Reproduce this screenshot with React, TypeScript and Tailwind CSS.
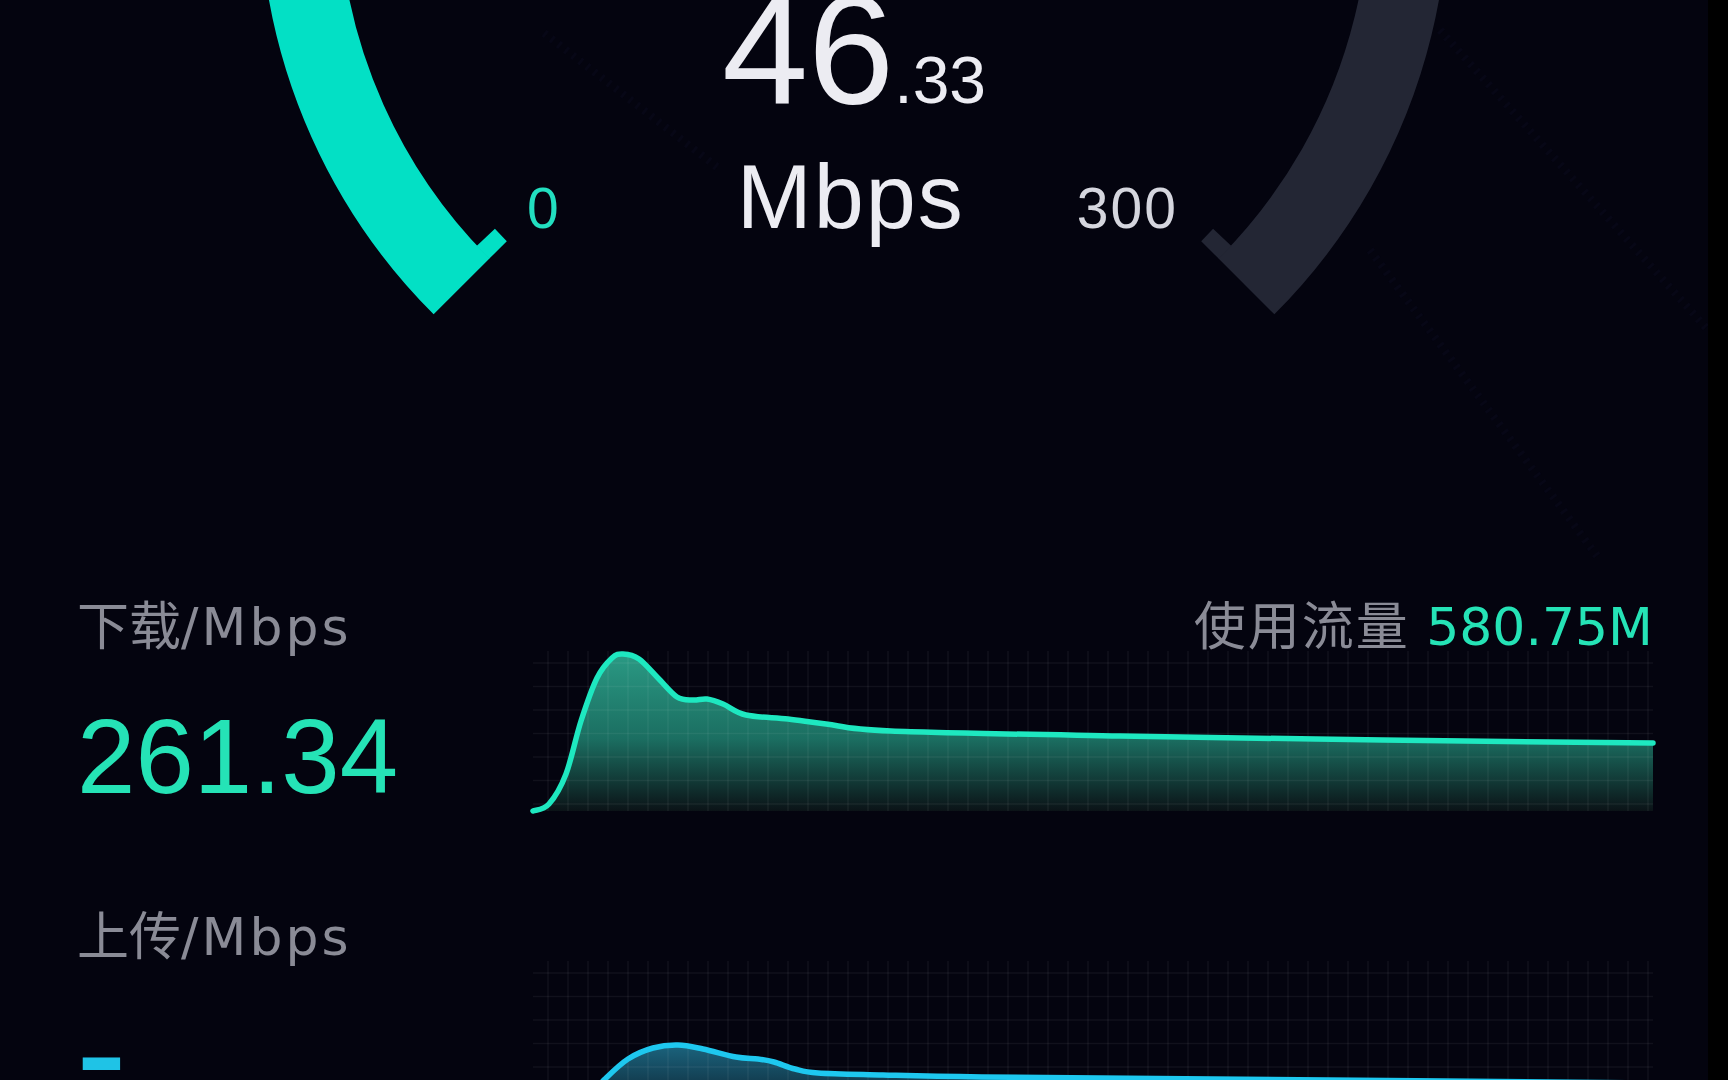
import React from "react"

type Pt = [number, number]

// 折线数据（本地坐标，宽 1120）
const DOWNLOAD: Pt[] = [
  [0, 160], [16, 153], [33, 123], [48, 70], [64, 27], [79, 7], [90, 3], [106, 8],
  [125, 27], [144, 46], [160, 49], [174, 48], [190, 53], [213, 64], [255, 68],
  [293, 73], [358, 80], [587, 85], [850, 89], [1120, 92],
]

const UPLOAD: Pt[] = [
  [0, 161], [30, 157], [52, 140], [72, 118], [95, 98], [120, 87], [145, 84],
  [170, 88], [203, 96], [225, 98], [241, 101], [262, 108], [285, 112], [350, 114],
  [449, 116], [680, 118], [1120, 122],
]

function smooth(pts: Pt[]) {
  let d = `M${pts[0][0]},${pts[0][1]}`
  for (let i = 0; i < pts.length - 1; i++) {
    const p0 = pts[i - 1] || pts[i]
    const p1 = pts[i]
    const p2 = pts[i + 1]
    const p3 = pts[i + 2] || p2
    const c1x = p1[0] + (p2[0] - p0[0]) / 6
    const c1y = p1[1] + (p2[1] - p0[1]) / 6
    const c2x = p2[0] - (p3[0] - p1[0]) / 6
    const c2y = p2[1] - (p3[1] - p1[1]) / 6
    d += ` C${c1x.toFixed(1)},${c1y.toFixed(1)} ${c2x.toFixed(1)},${c2y.toFixed(1)} ${p2[0]},${p2[1]}`
  }
  return d
}

function arc(cx: number, cy: number, r: number, a0: number, a1: number) {
  const rad = (a: number) => (a * Math.PI) / 180
  const x0 = cx + r * Math.cos(rad(a0))
  const y0 = cy + r * Math.sin(rad(a0))
  const x1 = cx + r * Math.cos(rad(a1))
  const y1 = cy + r * Math.sin(rad(a1))
  const large = a1 - a0 > 180 ? 1 : 0
  return `M${x0.toFixed(2)} ${y0.toFixed(2)} A${r} ${r} 0 ${large} 1 ${x1.toFixed(2)} ${y1.toFixed(2)}`
}

interface SpeedChartProps {
  id: string
  points: Pt[]
  height: number
  line: string
  stops: [string, string, string]
}

function SpeedChart({ id, points, height, line, stops }: SpeedChartProps) {
  const w = 1120
  const d = smooth(points)
  const area = `${d} L${w},${height} L0,${height} Z`
  const cols = Array.from({ length: 56 }, (_, i) => 15 + i * 20)
  const rows = Array.from({ length: 7 }, (_, i) => 12 + i * 23.5)

  return (
    <svg width={w} height={height} viewBox={`0 0 ${w} ${height}`} className="block shrink-0 overflow-visible">
      <defs>
        <linearGradient id={id} x1="0" y1="0" x2="0" y2={height} gradientUnits="userSpaceOnUse">
          <stop offset="0" stopColor={stops[0]} />
          <stop offset="0.55" stopColor={stops[1]} />
          <stop offset="1" stopColor={stops[2]} />
        </linearGradient>
      </defs>
      <path d={area} fill={`url(#${id})`} />
      <g stroke="#ffffff" strokeOpacity={0.055} strokeWidth={1.5}>
        {cols.map((x) => (
          <line key={`c${x}`} x1={x} y1={0} x2={x} y2={height} />
        ))}
        {rows.map((y) => (
          <line key={`r${y}`} x1={0} y1={y} x2={w} y2={y} />
        ))}
      </g>
      <path d={d} fill="none" stroke={line} strokeWidth={5.5} strokeLinecap="round" strokeLinejoin="round" />
    </svg>
  )
}

export default function App() {
  const cx = 854
  const cy = -106

  return (
    <div className="flex h-[1080px] w-[1728px] overflow-hidden bg-black">
      <main className="relative h-full w-[1708px] shrink-0 overflow-hidden bg-[#04040f]">
        {/* 仪表盘 */}
        <svg className="absolute inset-0" width={1708} height={1080} viewBox="0 0 1708 1080">
          <g stroke="#070716" strokeWidth={8} strokeDasharray="3 6" fill="none">
            <line x1={1440} y1={30} x2={1708} y2={330} />
            <line x1={1370} y1={250} x2={1600} y2={560} />
            <line x1={544} y1={33} x2={717} y2={167} />
          </g>
          <path d={arc(cx, cy, 555, 280, 405)} fill="none" stroke="#232634" strokeWidth={79} />
          <path d={arc(cx, cy, 503.5, 43, 45)} fill="none" stroke="#232634" strokeWidth={25} />
          <path d={arc(cx, cy, 555, 135, 176.7)} fill="none" stroke="#03e0c5" strokeWidth={79} />
          <path d={arc(cx, cy, 503.5, 135, 137)} fill="none" stroke="#03e0c5" strokeWidth={25} />
        </svg>

        <div className="relative flex flex-col font-['Liberation_Sans',Arial,sans-serif]">
          <div className="-mt-[28px] flex justify-center text-[155px] leading-none text-[#ececf2]">
            <span>
              46<span className="text-[66px]">.33</span>
            </span>
          </div>

          <div className="mt-[25px] flex items-baseline pl-[527px] leading-none">
            <span className="text-[57px] text-[#22dfc0]">0</span>
            <span className="ml-[178px] text-[90px] tracking-[2px] text-[#ececf2]">Mbps</span>
            <span className="ml-[112px] text-[57px] tracking-[2px] text-[#d5d6de]">300</span>
          </div>

          {/* 下载 */}
          <section className="mt-[361px] pl-[77px] pr-[55px]">
            <div className="flex items-baseline justify-between font-['DejaVu_Sans','Noto_Sans_CJK_SC',sans-serif] text-[52px] leading-[48px] text-[#8a8b96]">
              <span>
                下载<span className="tracking-[3px]">/Mbps</span>
              </span>
              <span>
                <span className="tracking-[2px]">使用流量</span> <span className="text-[#25e3b6]">580.75M</span>
              </span>
            </div>
            <div className="flex">
              <div className="w-[456px] shrink-0">
                <div className="mt-[53px] text-[105px] leading-none text-[#25e3b6]">261.34</div>
              </div>
              <SpeedChart
                id="dl"
                points={DOWNLOAD}
                height={160}
                line="#1ee8c0"
                stops={["#2b9b85", "#1b6e61", "#0b1317"]}
              />
            </div>
          </section>

          {/* 上传 */}
          <section className="mt-[102px] pl-[77px] pr-[55px]">
            <div className="flex items-baseline font-['DejaVu_Sans','Noto_Sans_CJK_SC',sans-serif] text-[52px] leading-[48px] text-[#8a8b96]">
              <span>
                上传<span className="tracking-[3px]">/Mbps</span>
              </span>
            </div>
            <div className="flex">
              <div className="w-[456px] shrink-0">
                <div className="mt-[41px] origin-left scale-x-[1.4] text-[105px] font-bold leading-none text-[#1fc3e6]">-</div>
              </div>
              <SpeedChart
                id="ul"
                points={UPLOAD}
                height={161}
                line="#1ec8ef"
                stops={["#2a8fb0", "#1a5f78", "#0a1420"]}
              />
            </div>
          </section>
        </div>
      </main>
      <div className="flex-1 bg-black" />
    </div>
  )
}
